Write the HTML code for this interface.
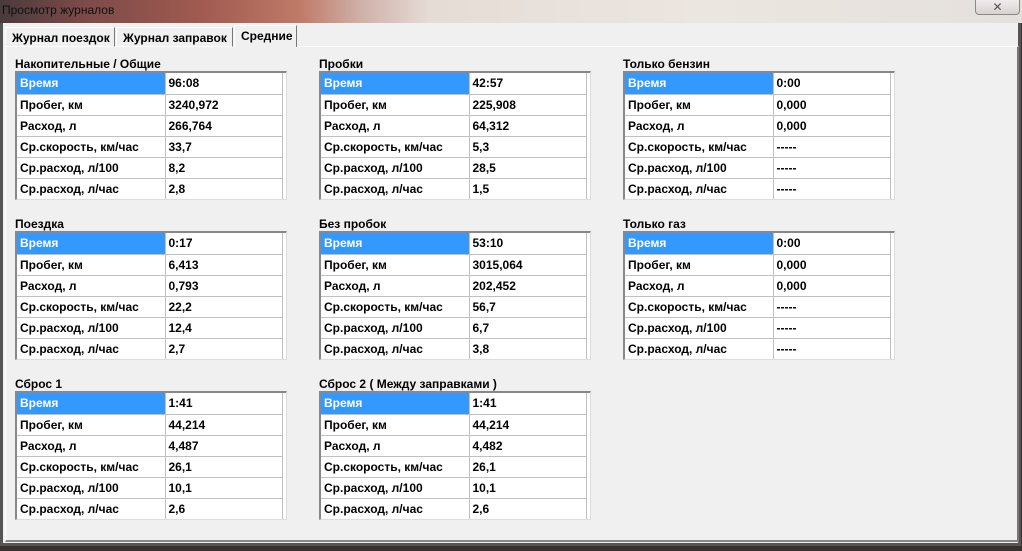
<!DOCTYPE html>
<html><head><meta charset="utf-8"><style>
*{margin:0;padding:0;box-sizing:border-box}
body{width:1022px;height:551px;overflow:hidden;position:relative;background:#3a3030;font-family:"Liberation Sans",sans-serif}
#title{position:absolute;left:0;top:0;width:1022px;height:23px;background:linear-gradient(90deg,#4a3a3c 0px,#7a4a48 80px,#a05a50 200px,#c07a68 300px,#cfb0a8 360px,#e6dcd6 430px,#ece6e0 700px,#e4e0dc 1022px)}
#title span{position:absolute;left:2px;top:3px;font-size:12px;color:#111}
#close{position:absolute;left:975px;top:-2px;width:45px;height:17px;border:1px solid #888;border-radius:0 0 4px 4px;background:linear-gradient(#f2eeee,#d8d2d0);font-size:12px;text-align:center;line-height:16px;color:#555}
#win{position:absolute;left:0;top:23px;width:1021px;height:523px;background:#f0f0f0;border-left:3px solid #555;border-right:3px solid #555;border-bottom:3px solid #555}
#panel{position:absolute;left:5px;top:46px;width:1014px;height:496px;border-top:1px solid #fff;border-left:1px solid #fff;border-right:2px solid #777;border-bottom:2px solid #888}
.tab{position:absolute;top:27px;height:20px;font-size:12px;font-weight:bold;background:#f0f0f0;border:1px solid #fff;border-right:1px solid #777;padding:3px 0 0 6px;color:#000;white-space:nowrap}
.tab.sel{top:25px;height:22px;border-bottom:none;z-index:2}
.lbl{position:absolute;font-size:12px;font-weight:bold;color:#000;white-space:nowrap}
.grid{position:absolute;width:272px;height:129px;background:#fff;border-top:2px solid #888;border-left:2px solid #888;border-right:1px solid #ddd;border-bottom:1px solid #ddd;overflow:hidden}
.grid table{border-collapse:collapse;position:absolute;left:0;top:0;table-layout:fixed}
.grid td{height:21px;border-right:1px solid #c0c0c0;border-bottom:1px solid #c0c0c0;font-size:12px;font-weight:bold;padding:0 0 0 3px;color:#000;white-space:nowrap;line-height:20px;overflow:hidden}
.grid td.a{width:148px}.grid td.b{width:117px}
.grid tr:first-child td.a{background:#3399ff;color:#fff}
</style></head><body>
<div id="title"><span>Просмотр журналов</span><div id="close">✕</div></div>
<div id="win"></div>
<div id="panel"></div>
<div class="tab" style="left:5px;width:110px">Журнал поездок</div>
<div class="tab" style="left:116px;width:117px">Журнал заправок</div>
<div class="tab sel" style="left:234px;width:63px">Средние</div>

<div class="lbl" style="left:15px;top:57px">Накопительные / Общие</div>
<div class="grid" style="left:15px;top:71px"><table>
<tr><td class="a">Время</td><td class="b">96:08</td></tr>
<tr><td class="a">Пробег, км</td><td class="b">3240,972</td></tr>
<tr><td class="a">Расход, л</td><td class="b">266,764</td></tr>
<tr><td class="a">Ср.скорость, км/час</td><td class="b">33,7</td></tr>
<tr><td class="a">Ср.расход, л/100</td><td class="b">8,2</td></tr>
<tr><td class="a">Ср.расход, л/час</td><td class="b">2,8</td></tr></table></div>

<div class="lbl" style="left:319px;top:57px">Пробки</div>
<div class="grid" style="left:319px;top:71px"><table>
<tr><td class="a">Время</td><td class="b">42:57</td></tr>
<tr><td class="a">Пробег, км</td><td class="b">225,908</td></tr>
<tr><td class="a">Расход, л</td><td class="b">64,312</td></tr>
<tr><td class="a">Ср.скорость, км/час</td><td class="b">5,3</td></tr>
<tr><td class="a">Ср.расход, л/100</td><td class="b">28,5</td></tr>
<tr><td class="a">Ср.расход, л/час</td><td class="b">1,5</td></tr></table></div>

<div class="lbl" style="left:623px;top:57px">Только бензин</div>
<div class="grid" style="left:623px;top:71px"><table>
<tr><td class="a">Время</td><td class="b">0:00</td></tr>
<tr><td class="a">Пробег, км</td><td class="b">0,000</td></tr>
<tr><td class="a">Расход, л</td><td class="b">0,000</td></tr>
<tr><td class="a">Ср.скорость, км/час</td><td class="b">-----</td></tr>
<tr><td class="a">Ср.расход, л/100</td><td class="b">-----</td></tr>
<tr><td class="a">Ср.расход, л/час</td><td class="b">-----</td></tr></table></div>

<div class="lbl" style="left:15px;top:217px">Поездка</div>
<div class="grid" style="left:15px;top:231px"><table>
<tr><td class="a">Время</td><td class="b">0:17</td></tr>
<tr><td class="a">Пробег, км</td><td class="b">6,413</td></tr>
<tr><td class="a">Расход, л</td><td class="b">0,793</td></tr>
<tr><td class="a">Ср.скорость, км/час</td><td class="b">22,2</td></tr>
<tr><td class="a">Ср.расход, л/100</td><td class="b">12,4</td></tr>
<tr><td class="a">Ср.расход, л/час</td><td class="b">2,7</td></tr></table></div>

<div class="lbl" style="left:319px;top:217px">Без пробок</div>
<div class="grid" style="left:319px;top:231px"><table>
<tr><td class="a">Время</td><td class="b">53:10</td></tr>
<tr><td class="a">Пробег, км</td><td class="b">3015,064</td></tr>
<tr><td class="a">Расход, л</td><td class="b">202,452</td></tr>
<tr><td class="a">Ср.скорость, км/час</td><td class="b">56,7</td></tr>
<tr><td class="a">Ср.расход, л/100</td><td class="b">6,7</td></tr>
<tr><td class="a">Ср.расход, л/час</td><td class="b">3,8</td></tr></table></div>

<div class="lbl" style="left:623px;top:217px">Только газ</div>
<div class="grid" style="left:623px;top:231px"><table>
<tr><td class="a">Время</td><td class="b">0:00</td></tr>
<tr><td class="a">Пробег, км</td><td class="b">0,000</td></tr>
<tr><td class="a">Расход, л</td><td class="b">0,000</td></tr>
<tr><td class="a">Ср.скорость, км/час</td><td class="b">-----</td></tr>
<tr><td class="a">Ср.расход, л/100</td><td class="b">-----</td></tr>
<tr><td class="a">Ср.расход, л/час</td><td class="b">-----</td></tr></table></div>

<div class="lbl" style="left:15px;top:377px">Сброс 1</div>
<div class="grid" style="left:15px;top:391px"><table>
<tr><td class="a">Время</td><td class="b">1:41</td></tr>
<tr><td class="a">Пробег, км</td><td class="b">44,214</td></tr>
<tr><td class="a">Расход, л</td><td class="b">4,487</td></tr>
<tr><td class="a">Ср.скорость, км/час</td><td class="b">26,1</td></tr>
<tr><td class="a">Ср.расход, л/100</td><td class="b">10,1</td></tr>
<tr><td class="a">Ср.расход, л/час</td><td class="b">2,6</td></tr></table></div>

<div class="lbl" style="left:319px;top:377px">Сброс 2 ( Между заправками )</div>
<div class="grid" style="left:319px;top:391px"><table>
<tr><td class="a">Время</td><td class="b">1:41</td></tr>
<tr><td class="a">Пробег, км</td><td class="b">44,214</td></tr>
<tr><td class="a">Расход, л</td><td class="b">4,482</td></tr>
<tr><td class="a">Ср.скорость, км/час</td><td class="b">26,1</td></tr>
<tr><td class="a">Ср.расход, л/100</td><td class="b">10,1</td></tr>
<tr><td class="a">Ср.расход, л/час</td><td class="b">2,6</td></tr></table></div>
</body></html>
